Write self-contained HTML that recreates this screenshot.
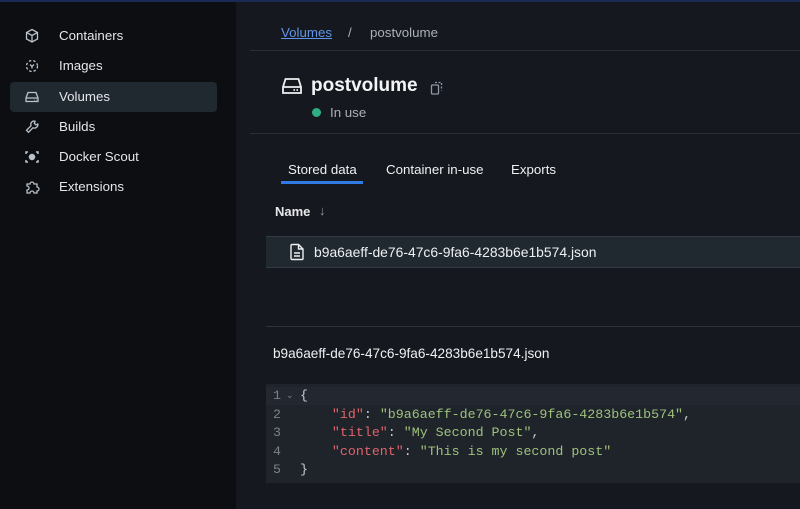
<!DOCTYPE html>
<html><head><meta charset="utf-8"><style>
*{margin:0;padding:0;box-sizing:border-box}
body{width:800px;height:509px;overflow:hidden;background:#15181e;font-family:"Liberation Sans",sans-serif;color:#e6e8ea;position:relative}
.topbar{position:absolute;left:0;top:0;width:800px;height:2px;background:#1a2a55}
.side{position:absolute;left:0;top:2px;width:236px;height:507px;background:#0c0e11}
.nav{position:absolute;left:10px;width:207px;height:30px;border-radius:4px;font-size:13.3px;color:#e3e6ea}
.nav span{position:absolute;left:49px;top:7px}
.nav svg{position:absolute;left:14px;top:7px}
.nav.act{background:#202830}
.hl{position:absolute;height:1px;background:#2a2f36}
.abs{position:absolute}
.mono{font-family:"Liberation Mono",monospace;font-size:13.3px;line-height:18.6px;white-space:pre}
.k{color:#e0646b}.s{color:#9ec27c}.p{color:#c8ccd2}.n{color:#7b828b}
</style></head><body>
<div class="topbar"></div>
<div class="side">
 <div class="nav" style="top:19px"><svg width="16" height="16" viewBox="0 0 16 16" fill="none" stroke="#b9c2cc" stroke-width="1.3"><path d="M8 1.5l5.5 3v6.5L8 14l-5.5-3V4.5z M2.5 4.5L8 7.5l5.5-3 M8 7.5V14"/></svg><span>Containers</span></div>
 <div class="nav" style="top:49px"><svg width="16" height="16" viewBox="0 0 16 16" fill="none" stroke="#b9c2cc" stroke-width="1.3" stroke-dasharray="2.5 2"><circle cx="8" cy="8" r="5.5"/><path d="M6 6.5l2 2 2-2M8 8.5v2" stroke-dasharray="none"/></svg><span>Images</span></div>
 <div class="nav act" style="top:80px"><svg width="16" height="16" viewBox="0 0 16 16" fill="none" stroke="#b9c2cc" stroke-width="1.3"><path d="M2 9l2-5.5h8L14 9v3.5H2z M2 9h12"/><path d="M10 11h.5M12 11h.5"/></svg><span>Volumes</span></div>
 <div class="nav" style="top:110px"><svg width="16" height="16" viewBox="0 0 16 16" fill="none" stroke="#b9c2cc" stroke-width="1.3"><path d="M10 2a3.5 3.5 0 0 0-3 4.8L2.5 11.3l2 2L9 8.8A3.5 3.5 0 0 0 13.8 5l-2 .8-1.5-1.5.8-2z"/></svg><span>Builds</span></div>
 <div class="nav" style="top:140px"><svg width="16" height="16" viewBox="0 0 16 16" fill="none" stroke="#b9c2cc" stroke-width="1.5"><circle cx="8" cy="8" r="2.5" fill="#b9c2cc"/><path d="M2 5V3h2M12 3h2v2M14 11v2h-2M4 13H2v-2"/></svg><span>Docker Scout</span></div>
 <div class="nav" style="top:170px"><svg width="16" height="16" viewBox="0 0 16 16" fill="none" stroke="#b9c2cc" stroke-width="1.3"><path d="M3 5h3a2 2 0 1 1 4 0h3v3a2 2 0 1 1 0 4v2h-3a2 2 0 1 0-4 0H3v-3a2 2 0 1 0 0-4z"/></svg><span>Extensions</span></div>
</div>
<div class="abs" style="left:281px;top:25px;font-size:13.3px;color:#5f95e8;text-decoration:underline">Volumes</div>
<div class="abs" style="left:348px;top:25px;font-size:13.3px;color:#aab1b9">/</div>
<div class="abs" style="left:370px;top:25px;font-size:13.3px;color:#aab1b9">postvolume</div>
<div class="hl" style="left:250px;top:50px;width:550px"></div>
<svg class="abs" style="left:281px;top:76px" width="22" height="20" viewBox="0 0 22 20" fill="none" stroke="#eef0f2" stroke-width="1.8"><path d="M2 11L4.5 3h13L20 11v6H2z M2 11h18"/><path d="M12.5 14h1.5M15.5 14h1.5"/></svg>
<div class="abs" style="left:311px;top:75px;font-size:19px;font-weight:bold;color:#f2f4f6">postvolume</div>
<svg class="abs" style="left:430px;top:80px" width="14" height="16" viewBox="0 0 14 16" fill="none" stroke="#8f98a3" stroke-width="1.3"><rect x="1.5" y="5" width="7" height="9" rx="1"/><path d="M5 2.5h6.5v8" stroke-dasharray="2 1.5"/></svg>
<div class="abs" style="left:312px;top:108px;width:9px;height:9px;border-radius:50%;background:#2fae86"></div>
<div class="abs" style="left:330px;top:105px;font-size:13.3px;color:#aab1b9">In use</div>
<div class="hl" style="left:250px;top:133px;width:550px"></div>
<div class="abs" style="left:288px;top:162px;font-size:13.3px;color:#eef0f2">Stored data</div>
<div class="abs" style="left:281px;top:181px;width:82px;height:3px;background:#2f7ae5"></div>
<div class="abs" style="left:386px;top:162px;font-size:13.3px;color:#eef0f2">Container in-use</div>
<div class="abs" style="left:511px;top:162px;font-size:13.3px;color:#eef0f2">Exports</div>
<div class="abs" style="left:275px;top:204px;font-size:13px;font-weight:bold;color:#e6e8ea">Name</div>
<div class="abs" style="left:319px;top:203px;font-size:13px;color:#8f98a3">↓</div>
<div class="abs" style="left:266px;top:236px;width:534px;height:32px;background:#202830;border-top:1px solid #343b44;border-bottom:1px solid #343b44"></div>
<svg class="abs" style="left:289px;top:243px" width="16" height="18" viewBox="0 0 16 18" fill="none" stroke="#eef0f2" stroke-width="1.4"><path d="M2 2.5a1 1 0 0 1 1-1h6.5L14 6v9.5a1 1 0 0 1-1 1H3a1 1 0 0 1-1-1z M9.5 1.5V6H14 M5 10h6M5 13h6"/></svg>
<div class="abs" style="left:314px;top:244px;font-size:13.9px;color:#eef0f2">b9a6aeff-de76-47c6-9fa6-4283b6e1b574.json</div>
<div class="hl" style="left:266px;top:326px;width:534px;background:#2f343b"></div>
<div class="abs" style="left:273px;top:346px;font-size:13.6px;color:#eef0f2">b9a6aeff-de76-47c6-9fa6-4283b6e1b574.json</div>
<div class="abs" style="left:266px;top:384px;width:534px;height:99px;background:#1f232a"></div>
<div class="abs" style="left:266px;top:387px;width:534px;height:18px;background:#232830"></div>
<div class="abs mono n" style="left:273px;top:387px">1
2
3
4
5</div>
<div class="abs" style="left:286px;top:390px;font-size:9px;color:#7b828b">⌄</div>
<div class="abs mono" style="left:300px;top:387px"><span class="p">{</span>
    <span class="k">"id"</span><span class="p">: </span><span class="s">"b9a6aeff-de76-47c6-9fa6-4283b6e1b574"</span><span class="p">,</span>
    <span class="k">"title"</span><span class="p">: </span><span class="s">"My Second Post"</span><span class="p">,</span>
    <span class="k">"content"</span><span class="p">: </span><span class="s">"This is my second post"</span>
<span class="p">}</span></div>
</body></html>
